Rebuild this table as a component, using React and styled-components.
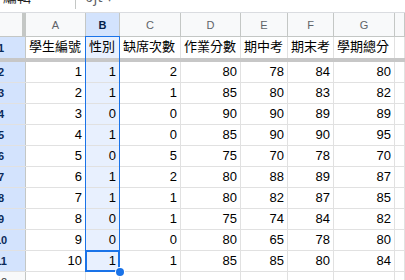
import React from "react";
import styled, { createGlobalStyle } from "styled-components";

const GlobalStyle = createGlobalStyle`
  html, body { margin: 0; padding: 0; background: #ffffff; }
  body { font-family: "Liberation Sans", "Noto Sans CJK TC", sans-serif; }
`;

const COLS = "26px 60px 34px 61px 60px 47px 46px 61px 1fr";

const Sheet = styled.div`
  position: relative;
  width: 405px;
  height: 280px;
  overflow: hidden;
  background: #fff;
`;

const TopStrip = styled.div`
  height: 12px;
  border-bottom: 1px solid #dadce0;
  display: flex;
  align-items: flex-end;
  overflow: hidden;
  position: relative;
`;

const StripText = styled.span`
  font-family: "Noto Sans CJK TC", sans-serif;
  font-size: 14px;
  line-height: 14px;
  color: ${(p) => p.$color || "#1f1f1f"};
  margin-left: ${(p) => p.$left}px;
  margin-bottom: 9px;
  white-space: nowrap;
`;

const StripDivider = styled.span`
  width: 1px;
  height: 9px;
  background: #c4c7c5;
  margin-left: 44px;
  align-self: flex-start;
`;

const Row = styled.div`
  display: grid;
  grid-template-columns: ${COLS};
  height: ${(p) => p.$h}px;
  box-sizing: border-box;
  border-bottom: ${(p) => (p.$noBorder ? "none" : `1px solid ${p.$line || "#e1e1e1"}`)};
`;

const FreezeBar = styled.div`
  height: 4px;
  background: #c7c7c7;
`;

const Corner = styled.div`
  background: #f8f9fa;
  border-right: 4px solid #c4c7c5;
  box-sizing: border-box;
`;

const ColHeader = styled.div`
  display: flex;
  align-items: center;
  justify-content: center;
  font-size: 11px;
  background: ${(p) => (p.$sel ? "#d3e3fd" : "#f8f9fa")};
  color: ${(p) => (p.$sel ? "#041e49" : "#5f6368")};
  font-weight: ${(p) => (p.$sel ? 700 : 400)};
  border-right: 1px solid #c4c7c5;
  box-sizing: border-box;
`;

const RowHeader = styled.div`
  background: ${(p) => (p.$sel ? "#d3e3fd" : "#f8f9fa")};
  border-right: 1px solid #c4c7c5;
  box-sizing: border-box;
  overflow: hidden;
  display: flex;
  align-items: center;
`;

const RowLabel = styled.span`
  flex: 0 0 44px;
  margin-left: -21px;
  text-align: center;
  font-size: 11px;
  font-weight: ${(p) => (p.$sel ? 700 : 400)};
  color: ${(p) => (p.$sel ? "#0b2a5a" : "#444746")};
`;

const Cell = styled.div`
  display: flex;
  align-items: ${(p) => (p.$center ? "center" : "flex-end")};
  justify-content: ${(p) => (p.$text ? "flex-start" : "flex-end")};
  padding: 0 3px 2px 3px;
  box-sizing: border-box;
  border-right: 1px solid #e1e1e1;
  background: ${(p) => (p.$sel ? "#e8f0fe" : "#fff")};
  font-size: 13px;
  line-height: 17px;
  color: #000;
  white-space: nowrap;
  overflow: hidden;
`;

const SelRange = styled.div`
  position: absolute;
  left: 85px;
  top: 36px;
  width: 35px;
  height: 236px;
  box-sizing: border-box;
  border: 1px solid #1a73e8;
  pointer-events: none;
`;

const ActiveCell = styled.div`
  position: absolute;
  left: 85px;
  top: 250px;
  width: 35px;
  height: 22px;
  box-sizing: border-box;
  border: 2px solid #1a73e8;
  pointer-events: none;
`;

const Handle = styled.div`
  position: absolute;
  left: 116px;
  top: 268px;
  width: 8px;
  height: 8px;
  border-radius: 50%;
  background: #1a73e8;
  box-shadow: 0 0 0 1px #ffffff;
`;

const letters = ["A", "B", "C", "D", "E", "F", "G", ""];
const headers = ["學生編號", "性別", "缺席次數", "作業分數", "期中考", "期末考", "學期總分"];
const data = [
  [1, 1, 2, 80, 78, 84, 80],
  [2, 1, 1, 85, 80, 83, 82],
  [3, 0, 0, 90, 90, 89, 89],
  [4, 1, 0, 85, 90, 90, 95],
  [5, 0, 5, 75, 70, 78, 70],
  [6, 1, 2, 80, 88, 89, 87],
  [7, 1, 1, 80, 82, 87, 85],
  [8, 0, 1, 75, 74, 84, 82],
  [9, 0, 0, 80, 65, 78, 80],
  [10, 1, 1, 85, 85, 80, 84],
];

export default function App() {
  return (
    <>
      <GlobalStyle />
      <Sheet>
        <TopStrip>
          <StripText $left={3}>編輯</StripText>
          <StripDivider />
          <StripText $left={10} $color="#5f6368">Jjt ▾</StripText>
        </TopStrip>
        <Row $h={24} $line="#c4c7c5">
          <Corner />
          {letters.map((l, i) => (
            <ColHeader key={i} $sel={l === "B"}>{l}</ColHeader>
          ))}
        </Row>
        <Row $h={21} $noBorder>
          <RowHeader $sel>
            <RowLabel $sel>1</RowLabel>
          </RowHeader>
          {headers.map((h, i) => (
            <Cell key={i} $text $center $sel={i === 1}>{h}</Cell>
          ))}
          <Cell />
        </Row>
        <FreezeBar />
        {data.map((r, ri) => (
          <Row key={ri} $h={21}>
            <RowHeader $sel>
              <RowLabel $sel>{ri + 2}</RowLabel>
            </RowHeader>
            {r.map((v, ci) => (
              <Cell key={ci} $sel={ci === 1}>{v}</Cell>
            ))}
            <Cell />
          </Row>
        ))}
        <Row $h={21}>
          <RowHeader>
            <RowLabel>12</RowLabel>
          </RowHeader>
          {letters.map((_, i) => (
            <Cell key={i} />
          ))}
        </Row>
        <SelRange />
        <ActiveCell />
        <Handle />
      </Sheet>
    </>
  );
}
